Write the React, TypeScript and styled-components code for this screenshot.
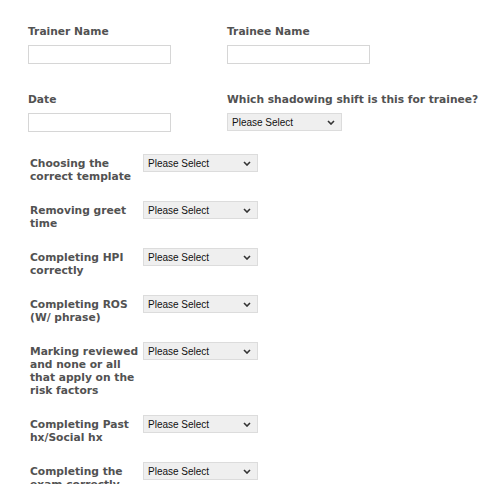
import React from 'react';
import styled, { createGlobalStyle } from 'styled-components';

const GlobalStyle = createGlobalStyle`
  html, body {
    margin: 0;
    padding: 0;
    background: #ffffff;
  }
  body {
    font-family: "DejaVu Sans", Verdana, sans-serif;
  }
`;

const criteria = [
  'Choosing the correct template',
  'Removing greet time',
  'Completing HPI correctly',
  'Completing ROS (W/ phrase)',
  'Marking reviewed and none or all that apply on the risk factors',
  'Completing Past hx/Social hx',
  'Completing the exam correctly',
  'Completing the assessment',
  'Completing the plan',
];

const Chevron = () => (
  <ChevronIcon viewBox="0 0 8 5" width="8" height="5">
    <path d="M1 1 L4 4 L7 1" fill="none" stroke="#333" strokeWidth="1.6" />
  </ChevronIcon>
);

const Dropdown = () => (
  <SelectWrap>
    <Select defaultValue="">
      <option value="">Please Select</option>
      <option value="1">1</option>
      <option value="2">2</option>
      <option value="3">3</option>
    </Select>
    <Chevron />
  </SelectWrap>
);

const App = () => {
  return (
    <Page>
      <GlobalStyle />
      <TopGrid>
        <Field>
          <Label>Trainer Name</Label>
          <TextInput type="text" />
        </Field>
        <Field>
          <Label>Trainee Name</Label>
          <TextInput type="text" />
        </Field>
        <Field>
          <Label>Date</Label>
          <TextInput type="text" />
        </Field>
        <Field>
          <Label>Which shadowing shift is this for trainee?</Label>
          <Dropdown />
        </Field>
      </TopGrid>
      <Criteria>
        {criteria.map((c) => (
          <Row key={c}>
            <RowLabel>{c}</RowLabel>
            <Dropdown />
          </Row>
        ))}
      </Criteria>
    </Page>
  );
};

export default App;

const Page = styled.div`
  padding: 25px 0 0 28px;
  width: 500px;
  box-sizing: border-box;
  height: 484px;
  overflow: hidden;
`;

//상단 입력
const TopGrid = styled.div`
  display: grid;
  grid-template-columns: 199px 260px;
  row-gap: 29px;
`;
const Field = styled.div`
  display: flex;
  flex-direction: column;
  align-items: flex-start;
`;
const Label = styled.label`
  font-weight: 700;
  font-size: 10.7px;
  line-height: 13px;
  color: #525252;
  white-space: nowrap;
  margin-bottom: 7px;
`;
const TextInput = styled.input`
  display: block;
  width: 143px;
  height: 19px;
  box-sizing: border-box;
  border: 1px solid #d6d6d6;
  background: #ffffff;
  outline: none;
  padding: 0 4px;
  margin: 0;
`;

//셀렉트
const SelectWrap = styled.div`
  position: relative;
  width: 115px;
  height: 18px;
`;
const Select = styled.select`
  display: block;
  appearance: none;
  -webkit-appearance: none;
  width: 100%;
  height: 100%;
  margin: 0;
  box-sizing: border-box;
  border: 1px solid #dcdcdc;
  border-radius: 0;
  background: #efefef;
  padding: 0 0 0 4px;
  font-family: "Liberation Sans", Arial, sans-serif;
  font-size: 10px;
  color: #111111;
  outline: none;
`;
const ChevronIcon = styled.svg`
  position: absolute;
  right: 7px;
  top: 7px;
  pointer-events: none;
`;

//평가 항목
const Criteria = styled.div`
  display: flex;
  flex-direction: column;
  padding-left: 2px;
  margin-top: 22px;
`;
const Row = styled.div`
  display: grid;
  grid-template-columns: 113px 115px;
  align-items: start;
  padding-bottom: 18.5px;
`;
const RowLabel = styled.div`
  font-weight: 700;
  font-size: 10.7px;
  line-height: 13px;
  color: #525252;
  padding-top: 2.5px;
  padding-right: 4px;
`;
